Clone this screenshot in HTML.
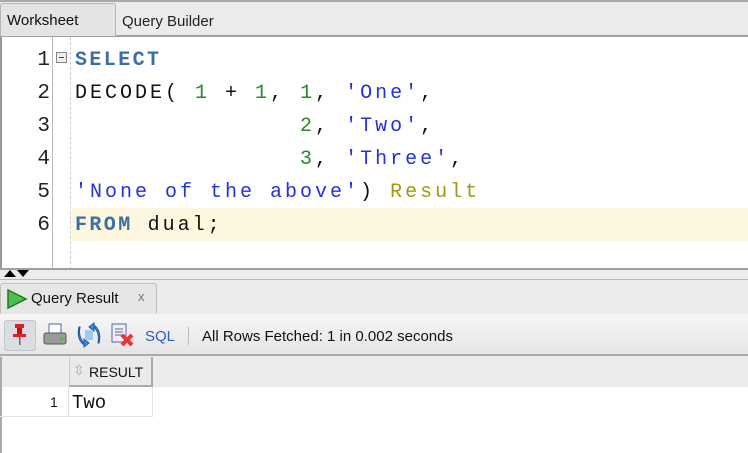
<!DOCTYPE html>
<html><head><style>
body{margin:0;width:748px;height:453px;overflow:hidden;background:#fff;font-family:"Liberation Sans",sans-serif;position:relative}
div{position:absolute;box-sizing:border-box}
.code{font-family:"Liberation Mono",monospace;font-size:20px;letter-spacing:3px;white-space:pre;left:75px;height:33px;line-height:33px;color:#111}
.ln{font-family:"Liberation Mono",monospace;font-size:21px;left:28px;width:22px;text-align:right;color:#222;line-height:33px}
.kw{color:#3a6ea5;font-weight:bold;letter-spacing:2.4px}.num{color:#2a8a2a}.str{color:#2233dd}.al{color:#a09a10}
</style></head><body>
<div style="left:0;top:0;width:748px;height:37px;background:#ebebeb;border-top:2px solid #a8a8a8;border-bottom:2px solid #a0a0a0"></div>
<div style="left:0;top:3px;width:116px;height:33px;background:#e4e4e4;border:1px solid #b5b5b5;border-bottom:none;border-radius:3px 3px 0 0;font-size:15px;line-height:33px;padding-left:6px;color:#111">Worksheet</div>
<div style="left:122px;top:3px;height:33px;font-size:15px;line-height:38px;color:#222">Query Builder</div>
<div style="left:0;top:37px;width:2px;height:232px;background:#999"></div>
<div style="left:52px;top:37px;width:1px;height:232px;background:#bbb"></div>
<div style="left:70px;top:37px;width:0;height:232px;border-left:1px dashed #ccc"></div>
<div style="left:72px;top:208px;width:676px;height:33px;background:#fef7e0"></div>
<div style="left:56px;top:52px;width:11px;height:11px;border:1px solid #888;background:#eee"><div style="left:2px;top:4px;width:5px;height:1px;background:#444"></div></div>
<div class="ln" style="top:44px">1</div><div class="ln" style="top:77px">2</div><div class="ln" style="top:110px">3</div><div class="ln" style="top:143px">4</div><div class="ln" style="top:176px">5</div><div class="ln" style="top:209px">6</div>
<div class="code" style="top:44px"><span class="kw">SELECT</span></div>
<div class="code" style="top:77px">DECODE( <span class="num">1</span> + <span class="num">1</span>, <span class="num">1</span>, <span class="str">'One'</span>,</div>
<div class="code" style="top:110px">               <span class="num">2</span>, <span class="str">'Two'</span>,</div>
<div class="code" style="top:143px">               <span class="num">3</span>, <span class="str">'Three'</span>,</div>
<div class="code" style="top:176px"><span class="str">'None of the above'</span>) <span class="al">Result</span></div>
<div class="code" style="top:209px"><span class="kw">FROM</span> dual;</div>
<div style="left:0;top:268px;width:748px;height:12px;background:#ececec;border-top:2px solid #a0a0a0;border-bottom:1px solid #bbb"></div>
<svg style="position:absolute;left:4px;top:270px" width="32" height="8"><polygon points="0,7 6,0 12,7" fill="#000"/><polygon points="13,0 25,0 19,7" fill="#000"/></svg>
<div style="left:0;top:280px;width:748px;height:173px;background:#ebebeb"></div>
<div style="left:0;top:283px;width:157px;height:32px;background:#e6e6e6;border:1px solid #c0c0c0;border-bottom:none;border-radius:3px 3px 0 0"></div>
<svg style="position:absolute;left:6px;top:288px" width="22" height="22"><polygon points="2,2 20,11 2,20" fill="#4fc04f" stroke="#1b7a1b" stroke-width="1.5"/></svg>
<div style="left:31px;top:290px;font-size:15px;color:#111">Query Result</div>
<div style="left:138px;top:289px;font-size:13px;color:#777">x</div>
<div style="left:0;top:314px;width:748px;height:42px;background:linear-gradient(#f6f6f6,#e6e6e6);border-bottom:2px solid #aaa"></div>
<div style="left:4px;top:320px;width:32px;height:31px;background:#dcdde2;border:1px solid #c4c6cc;border-radius:3px"></div>
<svg style="position:absolute;left:12px;top:322px" width="16" height="26"><rect x="3" y="2" width="9" height="4" fill="#d22"/><rect x="5" y="6" width="5" height="6" fill="#c11"/><rect x="1" y="12" width="13" height="3" fill="#d22"/><rect x="7" y="15" width="1.5" height="8" fill="#666"/></svg>
<svg style="position:absolute;left:42px;top:322px" width="26" height="26"><rect x="7" y="2" width="12" height="10" fill="#fff" stroke="#5566aa"/><rect x="2" y="11" width="22" height="11" rx="2" fill="#9a9a9a" stroke="#555"/><rect x="18" y="16" width="3" height="2" fill="#2c2"/></svg>
<svg style="position:absolute;left:76px;top:321px" width="26" height="28"><path d="M4 6 Q2 16 8 22 L8 18 L13 22 L8 26 L8 24 Q0 18 3 6Z" fill="#3a8ee0" stroke="#1c5aa8"/><path d="M22 22 Q24 12 18 6 L18 10 L13 6 L18 2 L18 4 Q26 10 23 22Z" fill="#3a8ee0" stroke="#1c5aa8"/><rect x="9" y="9" width="8" height="10" fill="#9ccaf5"/></svg>
<svg style="position:absolute;left:110px;top:322px" width="26" height="26"><rect x="2" y="2" width="14" height="18" fill="#eef" stroke="#5566aa"/><path d="M5 7h8M5 10h8M5 13h8" stroke="#667"/><path d="M12 13l10 10M22 13l-10 10" stroke="#e33" stroke-width="4"/></svg>
<div style="left:145px;top:328px;font-size:15px;color:#2d5fc0">SQL</div>
<div style="left:188px;top:327px;width:1px;height:18px;background:#bbb"></div>
<div style="left:202px;top:328px;font-size:15px;color:#111">All Rows Fetched: 1 in 0.002 seconds</div>
<div style="left:0;top:357px;width:748px;height:30px;background:#ececec"></div>
<div style="left:0;top:387px;width:748px;height:66px;background:#fff"></div>
<div style="left:0;top:357px;width:2px;height:96px;background:#aaa"></div>
<div style="left:69px;top:357px;width:84px;height:30px;background:#eaeaea;border-right:2px solid #aaa;border-bottom:2px solid #aaa;border-left:1px solid #ccc"></div>
<div style="left:73px;top:362px;font-size:14px;color:#aaa">⇳</div>
<div style="left:89px;top:364px;font-size:14px;color:#111">RESULT</div>
<div style="left:68px;top:387px;width:1px;height:29px;background:#ddd"></div>
<div style="left:0;top:416px;width:153px;height:1px;background:#e4e4e4"></div>
<div style="left:152px;top:387px;width:1px;height:30px;background:#e4e4e4"></div>
<div style="left:50px;top:394px;font-size:14px;color:#111">1</div>
<div style="left:72px;top:392px;font-family:'Liberation Mono',monospace;font-size:19px;color:#111">Two</div>
</body></html>
